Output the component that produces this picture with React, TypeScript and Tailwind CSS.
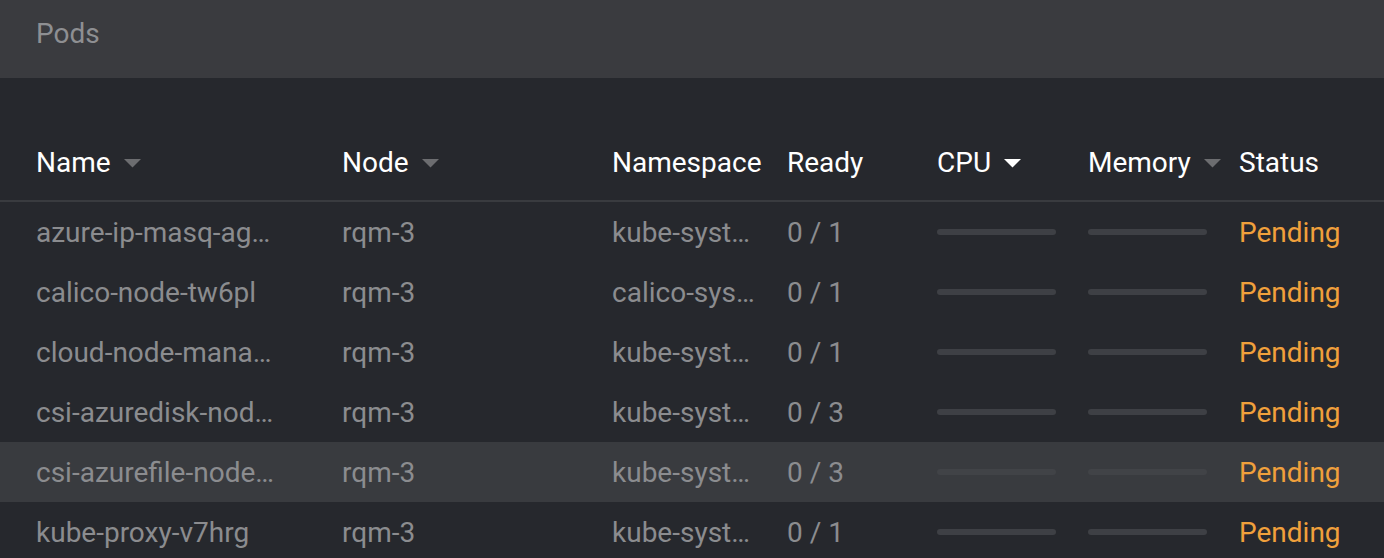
import React from "react";

type Pod = { name: string; node: string; ns: string; ready: string };

const pods: Pod[] = [
  { name: "azure-ip-masq-agent-x4k9d", node: "rqm-3", ns: "kube-system", ready: "0 / 1" },
  { name: "calico-node-tw6pl", node: "rqm-3", ns: "calico-system", ready: "0 / 1" },
  { name: "cloud-node-manager-5hq2z", node: "rqm-3", ns: "kube-system", ready: "0 / 1" },
  { name: "csi-azuredisk-node-8mvlc", node: "rqm-3", ns: "kube-system", ready: "0 / 3" },
  { name: "csi-azurefile-node-r2xbn", node: "rqm-3", ns: "kube-system", ready: "0 / 3" },
  { name: "kube-proxy-v7hrg", node: "rqm-3", ns: "kube-system", ready: "0 / 1" },
];

const cols = "grid grid-cols-[306px_270px_175px_150px_151px_151px_1fr]";

function SortArrow({ active }: { active?: boolean }) {
  return (
    <svg width="17" height="9" viewBox="0 0 17 9" className="ml-[13px] shrink-0">
      <polygon points="0,0 17,0 8.5,8.5" fill={active ? "#ffffff" : "#6c6d70"} />
    </svg>
  );
}

function Head({ label, sort, active }: { label: string; sort?: boolean; active?: boolean }) {
  return (
    <div className="flex items-center">
      <span>{label}</span>
      {sort && <SortArrow active={active} />}
    </div>
  );
}

function Bar({ hover }: { hover?: boolean }) {
  return (
    <div
      className={`h-[6px] w-[119px] rounded-full ${hover ? "bg-[#414347]" : "bg-[#3e4045]"}`}
    />
  );
}

export default function App() {
  return (
    <div
      className="h-[558px] w-[1384px] overflow-hidden bg-[#26282d] text-[28px]"
      style={{ fontFamily: "Roboto, 'Noto Sans', sans-serif" }}
    >
      <div className="h-[78px] bg-[#3a3b3f] px-[36px] pt-[18px] leading-[32px] text-[#8e8f92]">
        Pods
      </div>

      <div className="pt-[54px]">
        <div className={`${cols} h-[60px] items-center pl-[36px] pt-[2px] text-white`}>
          <Head label="Name" sort />
          <Head label="Node" sort />
          <Head label="Namespace" />
          <Head label="Ready" />
          <Head label="CPU" sort active />
          <Head label="Memory" sort />
          <Head label="Status" />
        </div>
        <div className="mt-[8px] h-[2px] bg-[#393b3f]" />

        {pods.map((p, i) => (
          <div
            key={p.name}
            className={`${cols} h-[60px] items-center pl-[36px] pt-[2px] text-[#8b8c8f] ${
              i === 4 ? "bg-[#393b3f]" : ""
            }`}
          >
            <div className="truncate pr-[64px]">{p.name}</div>
            <div className="truncate pr-[24px]">{p.node}</div>
            <div className="truncate pr-[32px]">{p.ns}</div>
            <div>{p.ready}</div>
            <div className="-mt-[2px]">
              <Bar hover={i === 4} />
            </div>
            <div className="-mt-[2px]">
              <Bar hover={i === 4} />
            </div>
            <div className="text-[#f0a03c]">Pending</div>
          </div>
        ))}
      </div>
    </div>
  );
}
